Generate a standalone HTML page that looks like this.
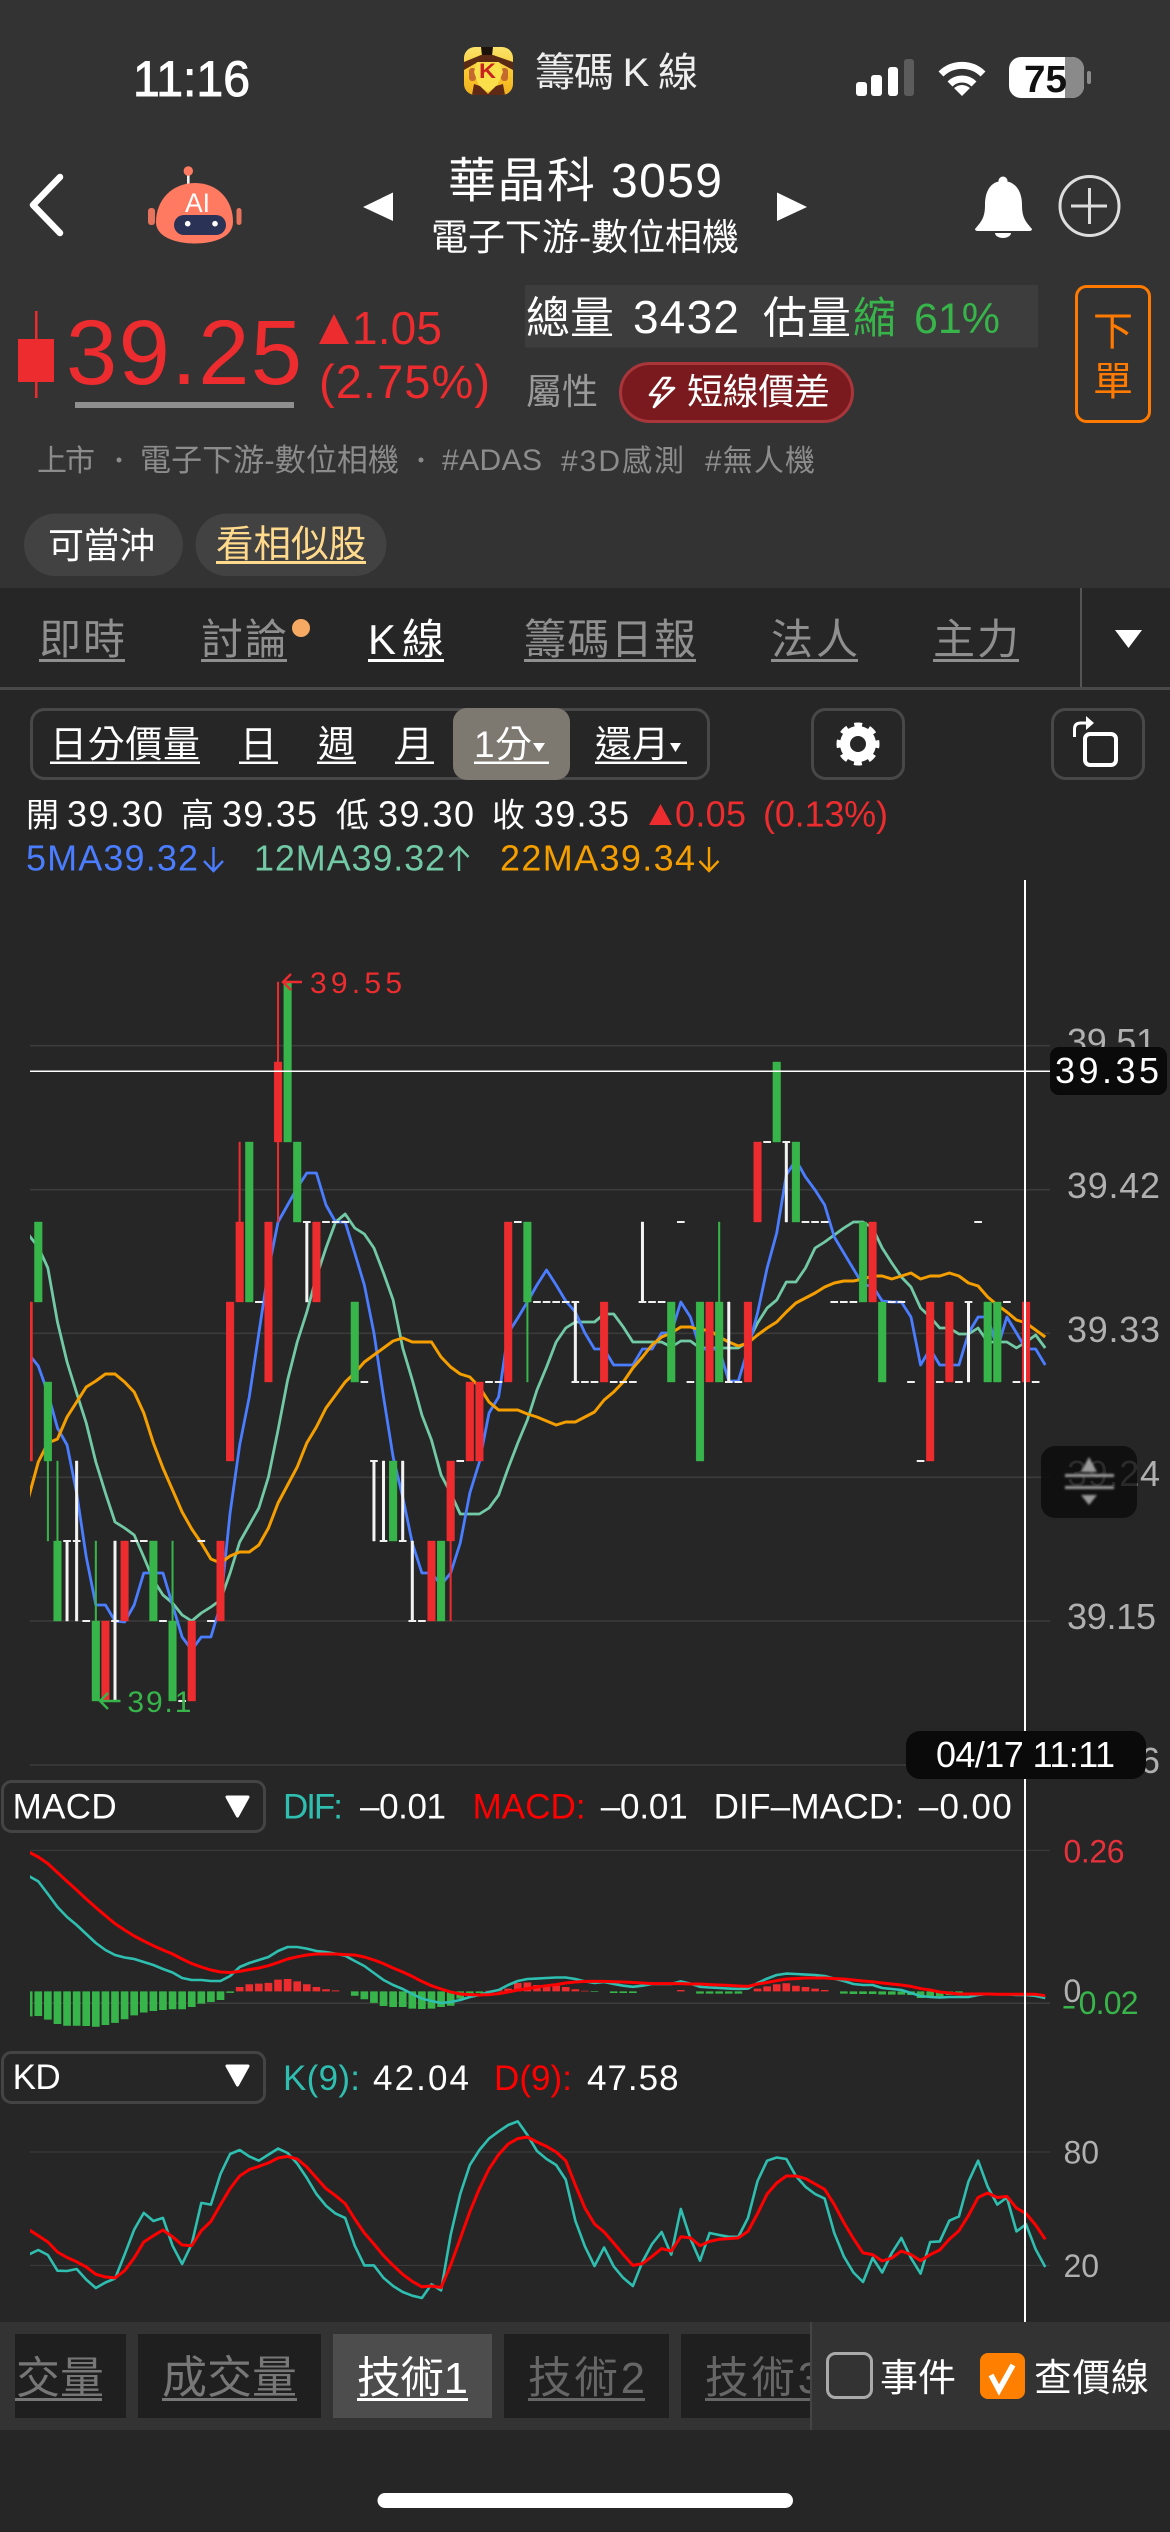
<!DOCTYPE html>
<html><head><meta charset="utf-8"><style>
html,body{margin:0;padding:0;background:#262626;width:1170px;height:2532px;overflow:hidden}
svg{display:block}
text{font-family:"Liberation Sans","Noto Sans CJK TC",sans-serif;fill:#fff}
.l{fill:none;vector-effect:non-scaling-stroke;stroke-linejoin:round}
.s{vector-effect:non-scaling-stroke;stroke-width:.4}
.w{vector-effect:non-scaling-stroke;stroke-width:.5}
</style></head><body>
<svg width="1170" height="2532" viewBox="0 0 1170 2532" xmlns="http://www.w3.org/2000/svg">
<defs>
<clipPath id="c"><rect x="30" y="880" width="1020" height="1460"/></clipPath>
<clipPath id="ic"><rect x="464" y="47" width="49" height="48" rx="11"/></clipPath>
<filter id="b"><feGaussianBlur stdDeviation="1"/></filter>
<linearGradient id="yg" x1="0" y1="0" x2="0" y2="1"><stop offset="0" stop-color="#fbe36a"/><stop offset=".6" stop-color="#f8c52a"/><stop offset="1" stop-color="#f0b020"/></linearGradient>
</defs>
<rect width="1170" height="2532" fill="#262626"/>
<rect width="1170" height="588" fill="#333"/>

<!-- status bar -->
<text x="133" y="96" font-size="50" stroke="#fff" stroke-width="1" textLength="117" lengthAdjust="spacingAndGlyphs">11:16</text>
<g clip-path="url(#ic)">
<rect x="464" y="47" width="49" height="48" fill="url(#yg)"/>
<path d="M481 47h12l-1 9h-10z" fill="#1c120a"/>
<path d="M464 62L481 55H493L513 62V70L498 62H478L464 70Z" fill="#5a2a14"/>
<rect x="469" y="68" width="7" height="13" rx="3" fill="#c46a2e"/>
<rect x="501" y="68" width="7" height="13" rx="3" fill="#c46a2e"/>
<path d="M477 62H499L503 72L497 86L488 92L479 86L474 72Z" fill="#f9e04a"/>
<path d="M474 84L480 86L488 94L496 86L503 84L505 95H472Z" fill="#5e2a16"/>
</g>
<text x="479" y="78" font-size="21" font-weight="bold" textLength="17" lengthAdjust="spacingAndGlyphs" style="fill:#c92020">K</text>
<text x="535" y="86" font-size="40" textLength="163" style="fill:#eee">籌碼 K 線</text>
<rect x="856" y="82" width="11" height="14" rx="3" fill="#fff"/>
<rect x="871" y="75" width="11" height="21" rx="3" fill="#fff"/>
<rect x="888" y="67" width="10" height="29" rx="3" fill="#fff"/>
<rect x="904" y="59" width="10" height="37" rx="3" fill="#5c5c5c"/>
<path d="M941 74A30 30 0 0 1 983 74M950 84A17 17 0 0 1 974 84" fill="none" stroke="#fff" stroke-width="7"/>
<path d="M954 88L962 96L970 88Q962 82 954 88Z" fill="#fff"/>
<rect x="1009" y="57" width="75" height="41" rx="12" fill="#fff"/>
<path d="M1065 57h7a12 12 0 0 1 12 12v17a12 12 0 0 1-12 12h-7z" fill="#8a8a8a"/>
<rect x="1087" y="71" width="4" height="13" rx="2" fill="#8a8a8a"/>
<text x="1024" y="92" font-size="38" font-weight="bold" textLength="43" lengthAdjust="spacingAndGlyphs" style="fill:#111">75</text>

<!-- nav -->
<path d="M60 177L33 205L60 233" fill="none" stroke="#fff" stroke-width="6.500" stroke-linecap="round" stroke-linejoin="round"/>
<rect x="187" y="175" width="2.600" height="9" fill="#f0f0f0"/>
<circle cx="188.300" cy="171" r="4.700" fill="#ff7a60"/>
<rect x="148" y="208" width="7" height="17" rx="3" fill="#e8735c"/>
<rect x="236.500" y="208" width="5" height="17" rx="2.500" fill="#e8735c"/>
<path d="M195 183C172 183 156 200 156 222C156 238 178 243.500 195 243.500C212 243.500 233 238 233 222C233 200 218 183 195 183Z" fill="#ff7a60"/>
<rect x="174" y="215" width="52" height="20" rx="10" fill="#2a3255"/>
<circle cx="187.700" cy="223.700" r="2.800" fill="#fff"/><circle cx="215" cy="223.700" r="2.800" fill="#fff"/>
<text x="185" y="212" font-size="27" textLength="25" lengthAdjust="spacingAndGlyphs">AI</text>
<path d="M393 192.500L363 207L393 221Z" fill="#fff"/>
<path d="M777 192.500L807 207L777 221Z" fill="#fff"/>
<text x="448" y="197" font-size="48" textLength="274">華晶科 3059</text>
<text x="431" y="250" font-size="37" textLength="308">電子下游-數位相機</text>
<circle cx="1003" cy="181" r="4.500" fill="#fff"/>
<path d="M1003 181C990 181 985 192 985 205C985 218 981 222 975 229Q975 231 978 231H1029Q1032 231 1032 229C1026 222 1022 218 1022 205C1022 192 1016 181 1003 181Z" fill="#fff"/>
<path d="M995 233H1011A8 5 0 0 1 995 233Z" fill="#fff"/>
<circle cx="1089.500" cy="206" r="29.500" fill="none" stroke="#ddd" stroke-width="3"/>
<path d="M1071 206H1107M1089.500 188V224" stroke="#ddd" stroke-width="3"/>

<!-- price row -->
<rect x="35" y="311" width="2.500" height="87" fill="#ec2c2e"/>
<rect x="18" y="339" width="36" height="43" fill="#ec2c2e"/>
<text x="66" y="384" font-size="92" textLength="236" style="fill:#ec2c2e">39.25</text>
<rect x="75" y="402" width="219" height="6" fill="#8f8f8f"/>
<path d="M334 314L349 344H319Z" fill="#ec2c2e"/>
<text x="352" y="344" font-size="46" textLength="90" style="fill:#ec2c2e">1.05</text>
<text x="319" y="398" font-size="47" textLength="171" style="fill:#ec2c2e">(2.75%)</text>

<rect x="525" y="285" width="513" height="62.500" fill="#3d3d3d"/>
<text x="526" y="333" font-size="44" textLength="88">總量</text>
<text x="633" y="333" font-size="46" textLength="106">3432</text>
<text x="763" y="333" font-size="44" textLength="88">估量</text>
<text x="853" y="333" font-size="43" style="fill:#38b54a">縮</text>
<text x="914" y="333" font-size="43" textLength="86" style="fill:#38b54a">61%</text>
<text x="526" y="404" font-size="36" style="fill:#9a9a9a">屬性</text>
<rect x="620.500" y="363.500" width="232" height="58" rx="29" fill="#7b1a1e" stroke="#a8363a" stroke-width="3"/>
<path d="M663 378L650 395H660L654 407L674 388H663L670 378Z" fill="none" stroke="#fff" stroke-width="2.600" stroke-linejoin="round"/>
<text x="687" y="404" font-size="36" textLength="143">短線價差</text>
<rect x="1076.500" y="286.500" width="73" height="135" rx="10" fill="none" stroke="#ff7a00" stroke-width="3"/>
<text x="1093" y="345" font-size="40" style="fill:#ff7a00">下</text>
<text x="1093" y="395" font-size="40" style="fill:#ff7a00">單</text>

<!-- tags -->
<text x="37" y="471" font-size="30" textLength="58" style="fill:#8c8c8c">上市</text>
<circle cx="119" cy="460" r="2.500" fill="#8c8c8c"/>
<text x="140" y="471" font-size="31" textLength="259" style="fill:#8c8c8c">電子下游-數位相機</text>
<circle cx="421" cy="460" r="2.500" fill="#8c8c8c"/>
<text x="442" y="470" font-size="30" textLength="100" style="fill:#8c8c8c">#ADAS</text>
<text x="561" y="471" font-size="30" textLength="123" style="fill:#8c8c8c">#3D感測</text>
<text x="705" y="471" font-size="30" textLength="110" style="fill:#8c8c8c">#無人機</text>

<rect x="24" y="513.500" width="159" height="62.500" rx="31" fill="#424242"/>
<text x="48" y="558" font-size="36" textLength="107">可當沖</text>
<rect x="195.500" y="513.500" width="191" height="62.500" rx="31" fill="#424242"/>
<text x="216" y="557" font-size="37.500" textLength="150" style="fill:#ffd98c">看相似股</text>
<rect x="216" y="561" width="150" height="3" fill="#ffd98c"/>

<!-- tabs -->
<rect x="1080" y="588" width="2" height="99" fill="#555"/>
<rect x="0" y="687" width="1170" height="3" fill="#4a4a4a"/>
<text x="39" y="654" font-size="42" textLength="86" style="fill:#8f8f8f">即時</text><rect x="39" y="659" width="86" height="3" fill="#8f8f8f"/>
<text x="201" y="654" font-size="42" textLength="86" style="fill:#8f8f8f">討論</text><rect x="201" y="659" width="86" height="3" fill="#8f8f8f"/>
<circle cx="301" cy="628" r="9" fill="#f5a962"/>
<text x="368" y="654" font-size="42" textLength="76">K線</text><rect x="368" y="659" width="76" height="3" fill="#fff"/>
<text x="524" y="654" font-size="42" textLength="172" style="fill:#8f8f8f">籌碼日報</text><rect x="524" y="659" width="172" height="3" fill="#8f8f8f"/>
<text x="771" y="654" font-size="42" textLength="87" style="fill:#8f8f8f">法人</text><rect x="771" y="659" width="87" height="3" fill="#8f8f8f"/>
<text x="933" y="654" font-size="42" textLength="86" style="fill:#8f8f8f">主力</text><rect x="933" y="659" width="86" height="3" fill="#8f8f8f"/>
<path d="M1115 630H1142L1128.500 648Z" fill="#fff"/>

<!-- period selector -->
<rect x="31.500" y="709.500" width="677" height="69" rx="13" fill="none" stroke="#484848" stroke-width="3"/>
<rect x="453" y="708" width="117" height="72" rx="14" fill="#7d7870"/>
<text x="50" y="757" font-size="37" textLength="150">日分價量</text><rect x="50" y="761.500" width="150" height="2.500" fill="#fff"/>
<text x="240" y="757" font-size="37">日</text><rect x="239" y="761.500" width="39" height="2.500" fill="#fff"/>
<text x="318" y="757" font-size="37">週</text><rect x="317" y="761.500" width="39" height="2.500" fill="#fff"/>
<text x="396" y="757" font-size="37">月</text><rect x="395" y="761.500" width="39" height="2.500" fill="#fff"/>
<text x="474" y="757" font-size="37" textLength="58">1分</text><rect x="474" y="761.500" width="75" height="2.500" fill="#fff"/>
<path d="M533 743H545L539 752Z" fill="#fff"/>
<text x="595" y="757" font-size="37" textLength="74">還月</text><rect x="595" y="761.500" width="92" height="2.500" fill="#fff"/>
<path d="M670 743H681L675.500 752Z" fill="#fff"/>
<rect x="812.500" y="709.500" width="91" height="69" rx="13" fill="none" stroke="#484848" stroke-width="3"/>
<circle cx="858" cy="744" r="13" fill="none" stroke="#fff" stroke-width="10"/>
<circle cx="858" cy="744" r="18.500" fill="none" stroke="#fff" stroke-width="6" stroke-dasharray="7.500 7.030" stroke-dashoffset="3.700"/>
<rect x="1052.500" y="709.500" width="91" height="69" rx="13" fill="none" stroke="#484848" stroke-width="3"/>
<rect x="1085" y="734" width="31" height="31" rx="5" fill="none" stroke="#fff" stroke-width="4"/>
<path d="M1074.500 737V729Q1074.500 723 1081 723H1087" fill="none" stroke="#fff" stroke-width="3"/>
<path d="M1086 716L1094 723L1086 730Z" fill="#fff"/>

<!-- OHLC -->
<text x="26" y="826.500" font-size="33">開</text>
<text x="67" y="826.500" font-size="36" textLength="96">39.30</text>
<text x="181" y="826.500" font-size="33">高</text>
<text x="222" y="826.500" font-size="36" textLength="95">39.35</text>
<text x="336" y="826.500" font-size="33">低</text>
<text x="378" y="826.500" font-size="36" textLength="96">39.30</text>
<text x="492" y="826.500" font-size="33">收</text>
<text x="534" y="826.500" font-size="36" textLength="95">39.35</text>
<path d="M660.500 804L672 825H649Z" fill="#ec2c2e"/>
<text x="675" y="826.500" font-size="36" textLength="71" style="fill:#ec2c2e">0.05</text>
<text x="763" y="826.500" font-size="36" textLength="125" style="fill:#ec2c2e">(0.13%)</text>
<text x="26" y="870.500" font-size="36" textLength="172" style="fill:#4a7dff">5MA39.32</text>
<path d="M213.500 847V871M204 861L213.500 871L223 861" fill="none" stroke="#4a7dff" stroke-width="2.400"/>
<text x="254" y="870.500" font-size="36" textLength="191" style="fill:#72c9a5">12MA39.32</text>
<path d="M459 871V847M449.500 857L459 847L468.500 857" fill="none" stroke="#72c9a5" stroke-width="2.400"/>
<text x="500" y="870.500" font-size="36" textLength="195" style="fill:#f59e00">22MA39.34</text>
<path d="M709 847V871M699.500 861L709 871L718.500 861" fill="none" stroke="#f59e00" stroke-width="2.400"/>

<!-- grids -->
<path d="M30 1045.700H1050M30 1189.700H1050M30 1333.300H1050M30 1477.300H1050M30 1621H1050M30 1765H1050M30 2003.200H1050" stroke="#3b3b3b" stroke-width="1.600"/>
<path d="M30 1850.400H1050M30 2152H1050M30 2265.400H1050" stroke="#3d3d3d" stroke-width="1"/>

<!-- axis labels -->
<text x="1067" y="1054" font-size="36" textLength="89" style="fill:#b0b0b0">39.51</text>
<text x="1067" y="1198" font-size="36" textLength="93" style="fill:#b0b0b0">39.42</text>
<text x="1067" y="1342" font-size="36" textLength="93" style="fill:#b0b0b0">39.33</text>
<text x="1067" y="1486" font-size="36" textLength="93" style="fill:#b0b0b0">39.24</text>
<text x="1067" y="1629" font-size="36" textLength="89" style="fill:#b0b0b0">39.15</text>
<text x="1067" y="1773" font-size="36" textLength="93" style="fill:#b0b0b0">39.06</text>
<text x="1063.500" y="1862.500" font-size="32" textLength="61" style="fill:#e6303a">0.26</text>
<text x="1063.500" y="2002" font-size="32" style="fill:#b0b0b0">0</text>
<rect x="1063.500" y="2006" width="11" height="2.500" fill="#38b54a"/>
<text x="1078.600" y="2014" font-size="32" textLength="60" style="fill:#38b54a">0.02</text>
<text x="1063.500" y="2163.500" font-size="32" textLength="35.500" style="fill:#b0b0b0">80</text>
<text x="1063.500" y="2277" font-size="32" textLength="35.500" style="fill:#b0b0b0">20</text>

<g clip-path="url(#c)"><g transform="translate(28.7 0) scale(9.59 1)">
<!-- MA lines -->
<polyline class="l" stroke="#72c9a5" stroke-width="2.800" points="0,1235 1,1247 2,1268 3,1322 4,1362 5,1393 6,1423 7,1462 8,1493 9,1522 10,1528 11,1535 12,1557 13,1580 14,1595 15,1603 16,1615 17,1621 18,1613 19,1607 20,1600 21,1573 22,1542 23,1525 24,1508 25,1477 26,1430 27,1380 28,1342 29,1312 30,1277 31,1248 32,1222 33,1214 34,1228 35,1234 36,1248 37,1273 38,1300 39,1348 40,1380 41,1415 42,1440 43,1475 44,1493 45,1514 46,1514 47,1514 48,1508 49,1495 50,1468 51,1443 52,1420 53,1390 54,1367 55,1342 56,1328 57,1322 58,1322 59,1322 60,1314 61,1314 62,1327 63,1342 64,1342 65,1342 66,1342 67,1347 68,1341 69,1341 70,1348 71,1348 72,1348 73,1348 74,1348 75,1342 76,1323 77,1308 78,1300 79,1282 80,1282 81,1268 82,1248 83,1242 84,1235 85,1228 86,1222 87,1222 88,1228 89,1248 90,1263 91,1277 92,1287 93,1308 94,1317 95,1328 96,1328 97,1334 98,1334 99,1328 100,1342 101,1342 102,1342 103,1348 104,1342 105,1335 106,1348"/>
<polyline class="l" stroke="#4a7dff" stroke-width="2.800" points="0,1354 1,1366 2,1393 3,1428 4,1445 5,1493 6,1557 7,1605 8,1605 9,1621 10,1622 11,1605 12,1573 13,1573 14,1573 15,1605 16,1637 17,1650 18,1637 19,1637 20,1605 21,1513 22,1445 23,1397 24,1333 25,1270 26,1222 27,1205 28,1188 29,1173 30,1173 31,1205 32,1222 33,1222 34,1253 35,1285 36,1333 37,1397 38,1457 39,1497 40,1543 41,1573 42,1573 43,1585 44,1573 45,1543 46,1493 47,1462 48,1413 49,1397 50,1333 51,1318 52,1302 53,1285 54,1270 55,1285 56,1301 57,1312 58,1333 59,1349 60,1349 61,1365 62,1365 63,1365 64,1349 65,1349 66,1333 67,1333 68,1302 69,1317 70,1349 71,1349 72,1349 73,1381 74,1381 75,1349 76,1313 77,1268 78,1233 79,1175 80,1160 81,1177 82,1190 83,1205 84,1237 85,1253 86,1269 87,1285 88,1286 89,1301 90,1302 91,1302 92,1317 93,1365 94,1349 95,1365 96,1365 97,1365 98,1333 99,1317 100,1317 101,1349 102,1317 103,1333 104,1349 105,1349 106,1365"/>
<polyline class="l" stroke="#f59e00" stroke-width="3" points="0,1497 1,1462 2,1443 3,1439 4,1417 5,1402 6,1387 7,1381 8,1374 9,1374 10,1382 11,1392 12,1413 13,1443 14,1468 15,1490 16,1512 17,1529 18,1543 19,1559 20,1563 21,1556 22,1552 23,1552 24,1545 25,1528 26,1503 27,1485 28,1467 29,1443 30,1427 31,1408 32,1395 33,1382 34,1373 35,1362 36,1355 37,1348 38,1341 39,1338 40,1342 41,1342 42,1342 43,1357 44,1367 45,1374 46,1377 47,1387 48,1402 49,1410 50,1410 51,1410 52,1414 53,1417 54,1421 55,1425 56,1422 57,1422 58,1417 59,1412 60,1400 61,1392 62,1382 63,1368 64,1357 65,1345 66,1337 67,1333 68,1327 69,1327 70,1330 71,1330 72,1337 73,1342 74,1346 75,1343 76,1335 77,1328 78,1322 79,1312 80,1303 81,1298 82,1293 83,1287 84,1283 85,1281 86,1281 87,1279 88,1276 89,1276 90,1279 91,1276 92,1273 93,1279 94,1276 95,1276 96,1273 97,1276 98,1283 99,1286 100,1297 101,1305 102,1312 103,1320 104,1323 105,1330 106,1337"/>

<!-- thin wicks -->
<path class="w" fill="#ec2c2e" stroke="#ec2c2e" d="M21.92 1142h.16V1222h-.16zM25.92 982h.16V1062h-.16zM25.92 1142h.16V1222h-.16zM43.92 1541h.16V1621h-.16z"/>
<path class="w" fill="#38b54a" stroke="#38b54a" d="M1.92 1461h.16V1541h-.16zM2.92 1461h.16V1541h-.16zM6.92 1541h.16V1621h-.16zM14.92 1541h.16V1621h-.16zM51.92 1302h.16V1382h-.16zM71.92 1222h.16V1302h-.16z"/>
<!-- white dojis -->
<path class="w" fill="#f4f4f4" stroke="#f4f4f4" d="M3.87 1541h.26V1621h-.26zM4.87 1461h.26V1621h-.26zM8.87 1541h.26V1701h-.26zM28.87 1222h.26V1302h-.26zM35.87 1461h.26V1541h-.26zM36.87 1461h.26V1541h-.26zM38.87 1461h.26V1541h-.26zM39.87 1541h.26V1621h-.26zM56.87 1302h.26V1382h-.26zM63.87 1222h.26V1302h-.26zM72.87 1302h.26V1382h-.26zM78.87 1142h.26V1222h-.26zM97.87 1302h.26V1382h-.26z"/>
<!-- white dashes -->
<path fill="#f0f0f0" d="M30.6 1221h.8v2h-.8zM31.6 1221h.8v2h-.8zM32.6 1221h.8v2h-.8zM28.6 1221h.8v2h-.8zM50.6 1221h.8v2h-.8zM67.6 1221h.8v2h-.8zM80.6 1221h.8v2h-.8zM81.6 1221h.8v2h-.8zM82.6 1221h.8v2h-.8zM98.6 1221h.8v2h-.8zM76.6 1141h.8v2h-.8zM78.6 1141h.8v2h-.8zM23.6 1301h.8v2h-.8zM52.6 1301h.8v2h-.8zM53.6 1301h.8v2h-.8zM54.6 1301h.8v2h-.8zM55.6 1301h.8v2h-.8zM56.6 1301h.8v2h-.8zM63.6 1301h.8v2h-.8zM64.6 1301h.8v2h-.8zM65.6 1301h.8v2h-.8zM83.6 1301h.8v2h-.8zM84.6 1301h.8v2h-.8zM85.6 1301h.8v2h-.8zM89.6 1301h.8v2h-.8zM90.6 1301h.8v2h-.8zM97.6 1301h.8v2h-.8zM101.6 1301h.8v2h-.8zM34.6 1381h.8v2h-.8zM47.6 1381h.8v2h-.8zM48.6 1381h.8v2h-.8zM56.6 1381h.8v2h-.8zM57.6 1381h.8v2h-.8zM58.6 1381h.8v2h-.8zM60.6 1381h.8v2h-.8zM61.6 1381h.8v2h-.8zM62.6 1381h.8v2h-.8zM68.6 1381h.8v2h-.8zM72.6 1381h.8v2h-.8zM73.6 1381h.8v2h-.8zM91.6 1381h.8v2h-.8zM94.6 1381h.8v2h-.8zM96.6 1381h.8v2h-.8zM102.6 1381h.8v2h-.8zM104.6 1381h.8v2h-.8zM44.6 1460h.8v2h-.8zM35.6 1460h.8v2h-.8zM92.6 1460h.8v2h-.8zM3.6 1540h.8v2h-.8zM4.6 1540h.8v2h-.8zM10.6 1540h.8v2h-.8zM11.6 1540h.8v2h-.8zM17.6 1540h.8v2h-.8zM36.6 1540h.8v2h-.8zM38.6 1540h.8v2h-.8zM5.6 1620h.8v2h-.8zM8.6 1620h.8v2h-.8zM13.6 1620h.8v2h-.8zM18.6 1620h.8v2h-.8zM39.6 1620h.8v2h-.8zM40.6 1620h.8v2h-.8zM15.6 1700h.8v2h-.8z"/>
<!-- red bodies -->
<path class="s" fill="#ec2c2e" stroke="#ec2c2e" d="M-.4 1302h.8V1461h-.8zM7.6 1621h.8V1701h-.8zM9.6 1541h.8V1621h-.8zM16.6 1621h.8V1701h-.8zM19.6 1541h.8V1621h-.8zM20.6 1302h.8V1461h-.8zM21.6 1222h.8V1302h-.8zM24.6 1222h.8V1382h-.8zM25.6 1062h.8V1142h-.8zM29.6 1222h.8V1302h-.8zM41.6 1541h.8V1621h-.8zM43.6 1461h.8V1541h-.8zM45.6 1382h.8V1461h-.8zM46.6 1382h.8V1461h-.8zM49.6 1222h.8V1382h-.8zM59.6 1302h.8V1382h-.8zM70.6 1302h.8V1382h-.8zM74.6 1302h.8V1382h-.8zM75.6 1142h.8V1222h-.8zM87.6 1222h.8V1302h-.8zM93.6 1302h.8V1461h-.8zM95.6 1302h.8V1382h-.8zM103.6 1302h.8V1382h-.8z"/>
<!-- green bodies -->
<path class="s" fill="#38b54a" stroke="#38b54a" d="M.6 1222h.8V1302h-.8zM1.6 1382h.8V1461h-.8zM2.6 1541h.8V1621h-.8zM6.6 1621h.8V1701h-.8zM12.6 1541h.8V1621h-.8zM14.6 1621h.8V1701h-.8zM22.6 1142h.8V1302h-.8zM26.6 982h.8V1142h-.8zM27.6 1142h.8V1222h-.8zM33.6 1302h.8V1382h-.8zM37.6 1461h.8V1541h-.8zM42.6 1541h.8V1621h-.8zM51.6 1222h.8V1302h-.8zM66.6 1302h.8V1382h-.8zM69.6 1302h.8V1461h-.8zM71.6 1302h.8V1382h-.8zM77.6 1062h.8V1142h-.8zM79.6 1142h.8V1222h-.8zM86.6 1222h.8V1302h-.8zM88.6 1302h.8V1382h-.8zM99.6 1302h.8V1382h-.8zM100.6 1302h.8V1382h-.8z"/>

<!-- MACD histogram -->
<path fill="#38b54a" d="M-.4 1991.4h.8V2016.4h-.8zM.6 1991.4h.8V2016h-.8zM1.6 1991.4h.8V2019.6h-.8zM2.6 1991.4h.8V2024h-.8zM3.6 1991.4h.8V2025.7h-.8zM4.6 1991.4h.8V2025.7h-.8zM5.6 1991.4h.8V2026h-.8zM6.6 1991.4h.8V2026.8h-.8zM7.6 1991.4h.8V2025h-.8zM8.6 1991.4h.8V2022.9h-.8zM9.6 1991.4h.8V2019.3h-.8zM10.6 1991.4h.8V2015.4h-.8zM11.6 1991.4h.8V2012.5h-.8zM12.6 1991.4h.8V2011h-.8zM13.6 1991.4h.8V2010h-.8zM14.6 1991.4h.8V2009.3h-.8zM15.6 1991.4h.8V2009.3h-.8zM16.6 1991.4h.8V2007h-.8zM17.6 1991.4h.8V2003.6h-.8zM18.6 1991.4h.8V2002h-.8zM19.6 1991.4h.8V2000h-.8zM20.6 1991.4h.8V1992.9h-.8zM33.6 1991.4h.8V1995.7h-.8zM34.6 1991.4h.8V1999.3h-.8zM35.6 1991.4h.8V2002.9h-.8zM36.6 1991.4h.8V2006h-.8zM37.6 1991.4h.8V2007h-.8zM38.6 1991.4h.8V2007h-.8zM39.6 1991.4h.8V2008.6h-.8zM40.6 1991.4h.8V2009h-.8zM41.6 1991.4h.8V2008.6h-.8zM42.6 1991.4h.8V2007h-.8zM43.6 1991.4h.8V2005.7h-.8zM44.6 1991.4h.8V1998.6h-.8zM45.6 1991.4h.8V1994h-.8zM46.6 1991.4h.8V1993h-.8zM58.6 1991.4h.8V1992h-.8zM60.6 1991.4h.8V1993h-.8zM61.6 1991.4h.8V1993h-.8zM62.6 1991.4h.8V1993h-.8zM69.6 1991.4h.8V1993.6h-.8zM70.6 1991.4h.8V1993.6h-.8zM71.6 1991.4h.8V1993.6h-.8zM72.6 1991.4h.8V1993.6h-.8zM73.6 1991.4h.8V1993.6h-.8zM84.6 1991.4h.8V1993.6h-.8zM85.6 1991.4h.8V1994h-.8zM86.6 1991.4h.8V1994h-.8zM87.6 1991.4h.8V1994h-.8zM88.6 1991.4h.8V1994.5h-.8zM89.6 1991.4h.8V1994.6h-.8zM90.6 1991.4h.8V1994.6h-.8zM91.6 1991.4h.8V1995h-.8zM92.6 1991.4h.8V1998h-.8zM93.6 1991.4h.8V1997.2h-.8zM94.6 1991.4h.8V1996.4h-.8zM95.6 1991.4h.8V1995h-.8zM96.6 1991.4h.8V1994h-.8z"/>
<path fill="#ec2c2e" d="M21.6 1987h.8v4.4h-.8zM22.6 1984.3h.8v7.1h-.8zM23.6 1983.6h.8v7.8h-.8zM24.6 1982.9h.8v8.5h-.8zM25.6 1979.6h.8v11.8h-.8zM26.6 1979h.8v12.4h-.8zM27.6 1981.4h.8v10h-.8zM28.6 1984.3h.8v7.1h-.8zM29.6 1987h.8v4.4h-.8zM30.6 1989.3h.8v2.1h-.8zM31.6 1990.4h.8v1h-.8zM47.6 1990.7h.8v.7h-.8zM48.6 1989.6h.8v1.8h-.8zM49.6 1988.6h.8v2.8h-.8zM50.6 1983h.8v8.4h-.8zM51.6 1982.5h.8v8.900h-.8zM52.6 1985h.8v6.4h-.8zM53.6 1985.7h.8v5.7h-.8zM54.6 1985.7h.8v5.7h-.8zM55.6 1987h.8v4.4h-.8zM56.6 1989.3h.8v2.1h-.8zM57.6 1990.7h.8v.7h-.8zM67.6 1990h.8v1.4h-.8zM75.6 1988.6h.8v2.8h-.8zM76.6 1986.4h.8v5h-.8zM77.6 1984.3h.8v7.1h-.8zM78.6 1983.2h.8v8.2h-.8zM79.6 1985.7h.8v5.7h-.8zM80.6 1987h.8v4.4h-.8zM81.6 1988.6h.8v2.8h-.8zM82.6 1990h.8v1.4h-.8z"/>
<!-- MACD lines -->
<polyline class="l" stroke="#2fbfb1" stroke-width="2.600" points="0,1876 1,1881.400 2,1894 3,1907 4,1917 5,1925 6,1934 7,1943 8,1950 9,1955 10,1957.500 11,1959 12,1962 13,1965 14,1969 15,1972.500 16,1978 17,1980 18,1980 19,1981 20,1981 21,1976 22,1967 23,1963 24,1960 25,1957 26,1951 27,1947 28,1947 29,1948.600 30,1951 31,1952 32,1953.600 33,1955.700 34,1961 35,1966 36,1973 37,1980 38,1985 39,1989 40,1994 41,1998.600 42,2001 43,2003 44,2002 45,2000 46,1997 47,1995 48,1992 49,1990 50,1985 51,1981 52,1979 53,1978.600 54,1978 55,1977.500 56,1977.500 57,1979 58,1981.400 59,1983 60,1982 61,1984 62,1985.700 63,1986.800 64,1985.700 65,1984 66,1984 67,1984 68,1981.400 69,1983.600 70,1986.800 71,1987.500 72,1988 73,1988.600 74,1989 75,1988.600 76,1983 77,1978.600 78,1975 79,1973.600 80,1974 81,1974.600 82,1975 83,1976 84,1978.600 85,1981 86,1984 87,1985 88,1985 89,1988 90,1989 91,1990 92,1993 93,1996 94,1997 95,1997.500 96,1997 97,1997 98,1997 99,1995 100,1994 101,1994.300 102,1994.300 103,1995 104,1995 105,1996 106,1998"/>
<polyline class="l" stroke="#ff0000" stroke-width="3" points="0,1852 1,1857 2,1863.600 3,1872.500 4,1881.400 5,1890 6,1899 7,1907.500 8,1915.700 9,1923.600 10,1930 11,1936 12,1941 13,1945.700 14,1950 15,1954 16,1959 17,1963.600 18,1967 19,1970 20,1972 21,1972.500 22,1971.400 23,1969.600 24,1968 25,1965.700 26,1962.500 27,1959 28,1956.800 29,1955 30,1954 31,1954 32,1954 33,1954.600 34,1955 35,1957 36,1960 37,1963.600 38,1968 39,1972 40,1976.400 41,1981.400 42,1985.700 43,1989 44,1992 45,1994 46,1994.600 47,1995 48,1994.600 49,1993.600 50,1992 51,1990 52,1988.600 53,1987 54,1985.700 55,1984.600 56,1983 57,1982 58,1981.400 59,1981.400 60,1981.400 61,1981.800 62,1982 63,1982.500 64,1983 65,1983.600 66,1983.600 67,1983.600 68,1983.600 69,1984 70,1984 71,1984.600 72,1985 73,1985.400 74,1986 75,1986.400 76,1984 77,1982.500 78,1980.700 79,1979 80,1978.600 81,1978 82,1978 83,1978 84,1978.600 85,1979 86,1980 87,1981 88,1981.800 89,1983 90,1984 91,1985 92,1986.400 93,1988.600 94,1990 95,1992 96,1993 97,1994 98,1994 99,1994 100,1994 101,1994.300 102,1994.300 103,1994.300 104,1994.300 105,1994.300 106,1995.700"/>
<!-- KD lines -->
<polyline class="l" stroke="#2fbfb1" stroke-width="2.600" points="0,2254.600 1,2250 2,2255 3,2270.700 4,2271 5,2269 6,2279.600 7,2288 8,2282.500 9,2278.600 10,2254.600 11,2229.600 12,2212.900 13,2221 14,2217.900 15,2245.700 16,2264 17,2244 18,2202.900 19,2204.600 20,2174 21,2154 22,2150 23,2156.400 24,2160.700 25,2154.600 26,2148.600 27,2153 28,2163.600 29,2177.900 30,2194 31,2205.700 32,2213.600 33,2217.900 34,2245.700 35,2265.400 36,2265.400 37,2277.900 38,2286 39,2292 40,2295.700 41,2298 42,2284.300 43,2290.400 44,2235 45,2194 46,2165 47,2150 48,2138.600 49,2131.400 50,2125 51,2121.400 52,2135 53,2151 54,2159 55,2165 56,2179.600 57,2220.700 58,2246.400 59,2266 60,2247.500 61,2266.400 62,2277.900 63,2286 64,2261.800 65,2244 66,2232 67,2254.600 68,2209 69,2238.600 70,2260.700 71,2233 72,2235 73,2236.800 74,2236.800 75,2218 76,2181 77,2160.700 78,2157.500 79,2159 80,2176 81,2186.800 82,2194 83,2198.600 84,2233 85,2256.400 86,2272.500 87,2282 88,2258 89,2272.500 90,2252.900 91,2237.900 92,2258 93,2273.600 94,2242 95,2241.400 96,2220.700 97,2216.400 98,2181.400 99,2160.700 100,2186.800 101,2204.600 102,2197.500 103,2231.400 104,2224.300 105,2249.300 106,2267"/>
<polyline class="l" stroke="#ff0000" stroke-width="3" points="0,2229.600 1,2235.700 2,2242 3,2252 4,2257.500 5,2261.800 6,2267 7,2274.300 8,2277 9,2277.900 10,2270.700 11,2258 12,2242 13,2235.700 14,2230 15,2236.800 16,2245 17,2245.700 18,2230.700 19,2221.400 20,2204.600 21,2188.600 22,2176 23,2169.600 24,2166.400 25,2162.900 26,2158 27,2156.400 28,2159 29,2167 30,2177.900 31,2188.600 32,2195.700 33,2203.600 34,2219 35,2233 36,2244 37,2255.700 38,2265.400 39,2274.300 40,2281.400 41,2286.800 42,2286 43,2287.500 44,2265 45,2238.600 46,2211.800 47,2188.600 48,2169 49,2154.600 50,2144 51,2138.600 52,2137 53,2142 54,2146.400 55,2152 56,2160.700 57,2185 58,2208 59,2224 60,2232 61,2243 62,2254.600 63,2265.400 64,2263.600 65,2256.400 66,2248.600 67,2251 68,2236.800 69,2237.900 70,2245.700 71,2241.400 72,2239.300 73,2238.600 74,2237.900 75,2231.400 76,2213.600 77,2194 78,2183 79,2176 80,2176 81,2178.600 82,2184 83,2189.300 84,2204.600 85,2222.500 86,2238.600 87,2252.900 88,2254.600 89,2261 90,2258 91,2251 92,2254.600 93,2260.700 94,2254.600 95,2250 96,2239.300 97,2230.700 98,2215.400 99,2197.500 100,2193 101,2197.500 102,2196.400 103,2208 104,2213.600 105,2225 106,2239.300"/>
</g></g>

<!-- hi/lo annotations -->
<path d="M302 982H283M291 974L283 982L291 990" fill="none" stroke="#ec2c2e" stroke-width="2.400"/>
<text x="310" y="993" font-size="30" textLength="92" style="fill:#ec2c2e">39.55</text>
<path d="M120.500 1701H100M108 1693L100 1701L108 1709" fill="none" stroke="#38b54a" stroke-width="2.400"/>
<text x="127.400" y="1712" font-size="30" textLength="64" style="fill:#38b54a">39.1</text>

<!-- crosshair -->
<rect x="30" y="1070.500" width="1020" height="1.500" fill="#fff"/>
<rect x="1024" y="880" width="2" height="1442" fill="#fff"/>

<!-- price label -->
<rect x="1050" y="1047" width="117" height="48" rx="9" fill="#0a0a0a"/>
<text x="1055" y="1083" font-size="36" textLength="104">39.35</text>

<!-- handle -->
<rect x="1041" y="1446" width="96" height="72" rx="14" fill="#0c0c0c" fill-opacity=".82"/>
<g filter="url(#b)" fill="#9a9a9a">
<path d="M1089 1457L1097 1472H1081Z"/>
<rect x="1065" y="1474" width="49" height="3"/>
<rect x="1065" y="1486" width="49" height="3"/>
<path d="M1081 1495H1097L1089 1505Z"/>
</g>

<!-- date label -->
<rect x="906" y="1731" width="240" height="48" rx="14" fill="#0a0a0a"/>
<text x="936" y="1767" font-size="36" textLength="179">04/17 11:11</text>

<!-- dropdowns -->
<rect x="2.500" y="1781.500" width="262" height="50" rx="9" fill="none" stroke="#444" stroke-width="3"/>
<text x="12.600" y="1818.500" font-size="35" textLength="104">MACD</text>
<path d="M227 1797H248L237.500 1816Z" fill="#fff" stroke="#fff" stroke-width="3" stroke-linejoin="round"/>
<text x="283" y="1818.500" font-size="35" textLength="60" style="fill:#2fbfb1">DIF:</text>
<text x="360" y="1818.500" font-size="35" textLength="86">–0.01</text>
<text x="472.600" y="1818.500" font-size="35" textLength="113" style="fill:#ff0000">MACD:</text>
<text x="600.700" y="1818.500" font-size="35" textLength="87">–0.01</text>
<text x="713.600" y="1818.500" font-size="35" textLength="190.500">DIF–MACD:</text>
<text x="918.700" y="1818.500" font-size="35" textLength="93">–0.00</text>

<rect x="2.500" y="2052.500" width="262" height="50" rx="9" fill="none" stroke="#444" stroke-width="3"/>
<text x="12.600" y="2089" font-size="35" textLength="48">KD</text>
<path d="M227 2066H248L237.500 2085Z" fill="#fff" stroke="#fff" stroke-width="3" stroke-linejoin="round"/>
<text x="283" y="2090" font-size="35" textLength="77" style="fill:#2fbfb1">K(9):</text>
<text x="373" y="2090" font-size="35" textLength="96">42.04</text>
<text x="494" y="2090" font-size="35" textLength="78" style="fill:#ff0000">D(9):</text>
<text x="587" y="2090" font-size="35" textLength="91.600">47.58</text>

<!-- bottom bar -->
<rect x="0" y="2322" width="1170" height="108" fill="#333"/>
<rect x="15" y="2334" width="111" height="84" fill="#1f1f1f"/>
<rect x="138" y="2334" width="183" height="84" fill="#1f1f1f"/>
<rect x="333" y="2334" width="159" height="84" fill="#4d4d4d"/>
<rect x="504" y="2334" width="165" height="84" fill="#1f1f1f"/>
<rect x="681" y="2334" width="129" height="84" fill="#1f1f1f"/>
<svg x="15" y="2334" width="111" height="84" viewBox="15 2334 111 84"><text x="-28" y="2393" font-size="44" style="fill:#777">成交量</text><rect x="15" y="2398" width="87" height="3" fill="#777"/></svg>
<text x="162" y="2393" font-size="45" textLength="135" style="fill:#777">成交量</text><rect x="162" y="2398" width="135" height="3" fill="#777"/>
<text x="357" y="2393" font-size="43.500" textLength="111">技術1</text><rect x="357" y="2398" width="111" height="3" fill="#fff"/>
<text x="528" y="2393" font-size="43.500" textLength="117" style="fill:#666">技術2</text><rect x="528" y="2398" width="117" height="3" fill="#666"/>
<svg x="681" y="2334" width="129" height="84" viewBox="681 2334 129 84"><text x="705" y="2393" font-size="43.500" textLength="117" style="fill:#666">技術3</text><rect x="705" y="2398" width="105" height="3" fill="#666"/></svg>
<rect x="810" y="2322" width="2" height="108" fill="#444"/>
<rect x="827.500" y="2353.500" width="44" height="44" rx="8" fill="#333" stroke="#aaa" stroke-width="3"/>
<text x="880" y="2391" font-size="38">事件</text>
<rect x="980" y="2353" width="45" height="46" rx="8" fill="#ff7f00"/>
<path d="M991 2375L999 2390L1013 2365" fill="none" stroke="#fff" stroke-width="5.500"/>
<text x="1034" y="2391" font-size="38" textLength="115">查價線</text>

<rect x="377.500" y="2493" width="415.500" height="15" rx="7.500" fill="#fff"/>
</svg>
</body></html>
